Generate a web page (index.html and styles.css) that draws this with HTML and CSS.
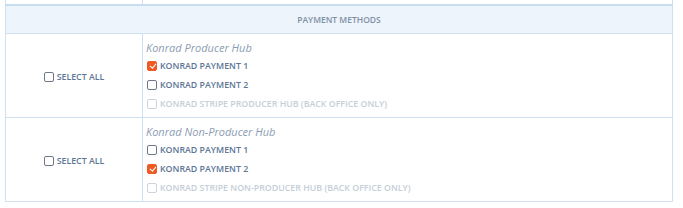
FILE: index.html
```html
<!DOCTYPE html>
<html lang="en">
<head>
    <meta charset="UTF-8">
    <title>Payment Methods</title>
    <link rel="stylesheet" href="styles.css">
</head>
<body>
    <div class="wrap">
        <table class="hubs">
            <tr class="prev-row">
                <td class="side"></td>
                <td></td>
            </tr>
            <tr>
                <th colspan="2">Payment Methods</th>
            </tr>
            <tr>
                <td class="side">
                    <label class="opt"><span class="box"></span>Select All</label>
                </td>
                <td class="methods">
                    <div class="hub-name">Konrad Producer Hub</div>
                    <label class="opt"><span class="box checked"></span>Konrad Payment 1</label>
                    <label class="opt"><span class="box"></span>Konrad Payment 2</label>
                    <label class="opt disabled"><span class="box"></span>Konrad Stripe Producer Hub (Back Office Only)</label>
                </td>
            </tr>
            <tr>
                <td class="side">
                    <label class="opt"><span class="box"></span>Select All</label>
                </td>
                <td class="methods">
                    <div class="hub-name">Konrad Non-Producer Hub</div>
                    <label class="opt"><span class="box"></span>Konrad Payment 1</label>
                    <label class="opt"><span class="box checked"></span>Konrad Payment 2</label>
                    <label class="opt disabled"><span class="box"></span>Konrad Stripe Non-Producer Hub (Back Office Only)</label>
                </td>
            </tr>
        </table>
    </div>
</body>
</html>
```

FILE: styles.css
```css
body {
    margin: 0;
    font-family: 'Open Sans', sans-serif;
    background-color: #ffffff;
}
.wrap {
    padding-left: 5px;
    width: 668px;
}
.hubs {
    width: 100%;
    border-collapse: collapse;
    border: 1px solid #cfe0f1;
    border-top: none;
}
.hubs td {
    border: 1px solid #cfe0f1;
    padding: 0;
    vertical-align: middle;
}
.hubs td.side {
    width: 136px;
    text-align: center;
}
.prev-row td {
    height: 4px;
    border-top: none;
    border-bottom: 2px solid #c8dcf0;
}
.hubs th {
    height: 27px;
    padding: 0;
    background-color: #edf4fc;
    color: #7e8fa4;
    font-size: 8.5px;
    font-weight: 600;
    text-transform: uppercase;
    border: none;
    border-left: 1px solid #cfe0f1;
    border-right: 1px solid #cfe0f1;
}
.methods {
    padding: 6px 0 4px 4px !important;
}
.hub-name {
    font-size: 11px;
    font-style: italic;
    color: #8c9db3;
    line-height: 16px;
    margin-left: -1px;
}
.opt {
    display: flex;
    align-items: center;
    height: 19px;
    font-size: 8.8px;
    font-weight: 600;
    text-transform: uppercase;
    color: #5d7696;
}
.side .opt {
    display: inline-flex;
}
.opt.disabled {
    color: #c6ced8;
}
.box {
    width: 8px;
    height: 8px;
    border: 1px solid #6e7886;
    border-radius: 2px;
    margin-right: 3px;
    position: relative;
}
.disabled .box {
    border-color: #cbd3dc;
}
.box.checked {
    background-color: #ee5a24;
    border-color: #ee5a24;
}
.box.checked::after {
    content: "";
    position: absolute;
    left: 2.5px;
    top: 0.5px;
    width: 2.5px;
    height: 5px;
    border: solid #ffffff;
    border-width: 0 1.5px 1.5px 0;
    transform: rotate(40deg);
}
```
